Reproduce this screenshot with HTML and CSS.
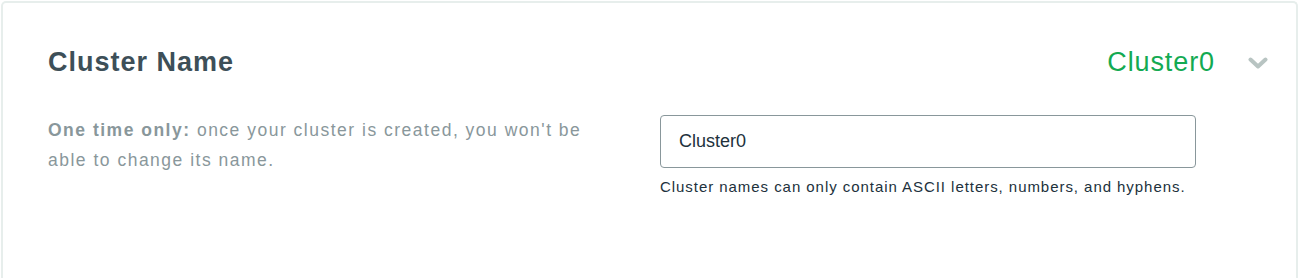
FILE: index.html
```html
<!DOCTYPE html>
<html>
<head>
<meta charset="utf-8">
<link rel="stylesheet" href="styles.css">
</head>
<body>
<section class="card">
  <header class="card-header">
    <h2 class="title">Cluster Name</h2>
    <div class="summary">
      <span class="summary-value">Cluster0</span>
      <svg class="chevron" width="20" height="12" viewBox="0 0 20 12"><path d="M2.5 2.5 L10 9.5 L17.5 2.5" fill="none" stroke="#b8c4c2" stroke-width="4" stroke-linecap="round" stroke-linejoin="round"/></svg>
    </div>
  </header>
  <div class="card-body">
    <p class="desc"><strong>One time only:</strong> once your cluster is created, you won't be able to change its name.</p>
    <div class="field">
      <input class="input" type="text" value="Cluster0">
      <p class="hint">Cluster names can only contain ASCII letters, numbers, and hyphens.</p>
    </div>
  </div>
</section>
</body>
</html>
```
FILE: styles.css
```css
html, body {
  margin: 0;
  padding: 0;
  background: #ffffff;
  font-family: "Liberation Sans", Arial, sans-serif;
}
.card {
  margin: 1px 2px 0 1px;
  border: 2px solid #e7eeec;
  border-bottom: none;
  border-radius: 5px 5px 0 0;
  background: #fff;
  height: 277px;
  box-sizing: border-box;
  padding: 0 28px 0 45px;
}
.card-header {
  display: flex;
  align-items: center;
  justify-content: space-between;
  padding-top: 41px;
  height: 36px;
}
.title {
  margin: 0;
  font-size: 27px;
  line-height: 36px;
  font-weight: bold;
  letter-spacing: 1px;
  color: #3d4f58;
}
.summary {
  display: flex;
  align-items: center;
  gap: 33px;
}
.summary-value {
  font-size: 27px;
  line-height: 36px;
  letter-spacing: 0.9px;
  color: #13aa52;
}
.chevron {
  display: block;
  margin-top: 2px;
}
.card-body {
  display: grid;
  grid-template-columns: 612px 536px;
  margin-top: 35px;
}
.desc {
  margin: 0;
  width: 560px;
  font-size: 17.5px;
  line-height: 30px;
  letter-spacing: 1.5px;
  color: #89979b;
}
.desc strong {
  font-weight: bold;
}
.field {
  display: flex;
  flex-direction: column;
}
.input {
  box-sizing: border-box;
  width: 536px;
  height: 53px;
  border: 1px solid #89979b;
  border-radius: 4px;
  padding: 0 18px;
  font-family: "Liberation Sans", Arial, sans-serif;
  font-size: 18px;
  color: #21313c;
  outline: none;
}
.hint {
  margin: 9px 0 0;
  font-size: 15px;
  line-height: 20px;
  letter-spacing: 0.95px;
  color: #21313c;
}
```
